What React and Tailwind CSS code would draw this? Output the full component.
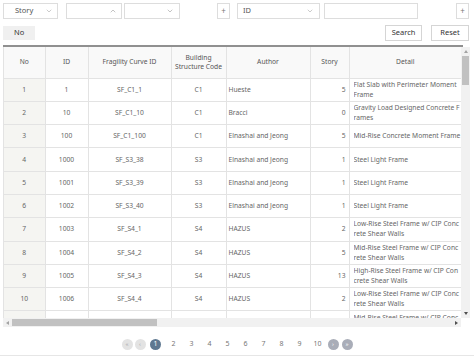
import { ChevronDown, ChevronUp } from 'lucide-react';

const rows = [
  { no: 1, id: '1', fc: 'SF_C1_1', code: 'C1', author: 'Hueste', story: 5, detail: ['Flat Slab with Perimeter Moment', 'Frame'] },
  { no: 2, id: '10', fc: 'SF_C1_10', code: 'C1', author: 'Bracci', story: 0, detail: ['Gravity Load Designed Concrete F', 'rames'] },
  { no: 3, id: '100', fc: 'SF_C1_100', code: 'C1', author: 'Elnashai and Jeong', story: 5, detail: ['Mid-Rise Concrete Moment Frame'] },
  { no: 4, id: '1000', fc: 'SF_S3_38', code: 'S3', author: 'Elnashai and Jeong', story: 1, detail: ['Steel Light Frame'] },
  { no: 5, id: '1001', fc: 'SF_S3_39', code: 'S3', author: 'Elnashai and Jeong', story: 1, detail: ['Steel Light Frame'] },
  { no: 6, id: '1002', fc: 'SF_S3_40', code: 'S3', author: 'Elnashai and Jeong', story: 1, detail: ['Steel Light Frame'] },
  { no: 7, id: '1003', fc: 'SF_S4_1', code: 'S4', author: 'HAZUS', story: 2, detail: ['Low-Rise Steel Frame w/ CIP Conc', 'rete Shear Walls'] },
  { no: 8, id: '1004', fc: 'SF_S4_2', code: 'S4', author: 'HAZUS', story: 5, detail: ['Mid-Rise Steel Frame w/ CIP Conc', 'rete Shear Walls'] },
  { no: 9, id: '1005', fc: 'SF_S4_3', code: 'S4', author: 'HAZUS', story: 13, detail: ['High-Rise Steel Frame w/ CIP Con', 'crete Shear Walls'] },
  { no: 10, id: '1006', fc: 'SF_S4_4', code: 'S4', author: 'HAZUS', story: 2, detail: ['Low-Rise Steel Frame w/ CIP Conc', 'rete Shear Walls'] },
  { no: 11, id: '1007', fc: 'SF_S4_5', code: 'S4', author: 'HAZUS', story: 5, detail: ['Mid-Rise Steel Frame w/ CIP Conc', 'rete Shear Walls'] },
];

const pages = [1, 2, 3, 4, 5, 6, 7, 8, 9, 10];

function App() {
  return (
    <div className="w-[474px] h-[363px] bg-white overflow-hidden text-[#555]" style={{ fontFamily: '"Noto Sans", "Open Sans", sans-serif' }}>
      {/* Filter row */}
      <div className="flex pt-[3px] h-[19px] text-[7.5px]">
        <div className="ml-[3px] w-[55px] h-[16px] border border-[#ddd] flex items-center pl-[11px] pr-[4px]">
          <span>Story</span>
          <ChevronDown size={8} strokeWidth={1.5} className="ml-auto text-[#999]" />
        </div>
        <div className="ml-[8px] w-[56px] h-[16px] border border-[#ddd] flex items-center pr-[4px]">
          <ChevronUp size={8} strokeWidth={1.5} className="ml-auto text-[#888]" />
        </div>
        <div className="ml-[2px] w-[56px] h-[16px] border border-[#ddd] flex items-center pr-[5px]">
          <ChevronDown size={8} strokeWidth={1.5} className="ml-auto text-[#888]" />
        </div>
        <div className="ml-[37px] w-[13px] h-[16px] border border-[#ddd] flex items-center justify-center text-[8px] text-[#777]">+</div>
        <div className="ml-[7px] w-[83px] h-[16px] border border-[#ddd] flex items-center pl-[5px] pr-[5px]">
          <span>ID</span>
          <ChevronDown size={8} strokeWidth={1.5} className="ml-auto text-[#999]" />
        </div>
        <div className="ml-[4px] w-[94px] h-[16px] border border-[#ddd]"></div>
        <div className="ml-[38px] w-[13px] h-[16px] border border-[#ddd] flex items-center justify-center text-[8px] text-[#777]">+</div>
      </div>

      {/* Tag + buttons */}
      <div className="flex items-center mt-[6px] h-[16px] text-[7.5px]">
        <div className="ml-[3px] w-[32px] h-[14px] bg-[#f0f0f0] flex items-center pl-[11px] text-[#333]">No</div>
        <div className="ml-auto w-[37px] h-[16px] border border-[#d5d5d5] flex items-center justify-center text-[#333]">Search</div>
        <div className="ml-[9px] mr-[5px] w-[38px] h-[16px] border border-[#d5d5d5] flex items-center justify-center text-[#333]">Reset</div>
      </div>

      {/* Grid */}
      <div className="mt-[4px] ml-[3px] w-[467px]">
        <div className="w-[460px] h-[2px] bg-[#909090]"></div>
        <div className="flex">
          <div className="w-[458px] h-[271px] overflow-hidden border-l border-[#e3e3e3]">
            <table className="table-fixed border-collapse w-[457px] text-[6.7px] text-[#666]">
              <colgroup>
                <col className="w-[41px]" />
                <col className="w-[43px]" />
                <col className="w-[83px]" />
                <col className="w-[55px]" />
                <col className="w-[84px]" />
                <col className="w-[39px]" />
                <col className="w-[112px]" />
              </colgroup>
              <thead>
                <tr className="bg-[#f9f9f9] text-[#555]">
                  <th className="h-[31px] font-normal border-b border-r border-[#e3e3e3]">No</th>
                  <th className="font-normal border-b border-r border-[#e3e3e3]">ID</th>
                  <th className="font-normal border-b border-r border-[#e3e3e3]">Fragility Curve ID</th>
                  <th className="font-normal border-b border-r border-[#e3e3e3] leading-[9px]">Building<br />Structure Code</th>
                  <th className="font-normal border-b border-r border-[#e3e3e3]">Author</th>
                  <th className="font-normal border-b border-r border-[#e3e3e3]">Story</th>
                  <th className="font-normal border-b border-[#e3e3e3]">Detail</th>
                </tr>
              </thead>
              <tbody>
                {rows.map((r) => (
                  <tr key={r.no}>
                    <td className="h-[23.3px] p-0 text-center bg-[#f5f5f2] border-b border-r border-[#e3e3e3]">{r.no}</td>
                    <td className="p-0 text-center border-b border-r border-[#e3e3e3]">{r.id}</td>
                    <td className="p-0 text-center border-b border-r border-[#e3e3e3]">{r.fc}</td>
                    <td className="p-0 text-center border-b border-r border-[#e3e3e3]">{r.code}</td>
                    <td className="p-0 pl-[2px] text-left border-b border-r border-[#e3e3e3] whitespace-nowrap overflow-hidden">{r.author}</td>
                    <td className="p-0 pr-[3px] text-right border-b border-r border-[#e3e3e3]">{r.story}</td>
                    <td className="p-0 pl-[4px] text-left border-b border-[#e3e3e3] leading-[10px]">
                      {r.detail.map((line, i) => (
                        <div key={i} className="whitespace-nowrap overflow-hidden">{line}</div>
                      ))}
                    </td>
                  </tr>
                ))}
              </tbody>
            </table>
          </div>
          {/* vertical scrollbar */}
          <div className="w-[9px] h-[271px] bg-[#f1f1f1] flex flex-col items-center">
            <div className="mt-[3px] w-0 h-0 border-l-[2.5px] border-r-[2.5px] border-b-[3px] border-l-transparent border-r-transparent border-b-[#a3a3a3]"></div>
            <div className="mt-[3px] w-[7px] h-[29px] bg-[#c1c1c1]"></div>
            <div className="mt-auto mb-[3px] w-0 h-0 border-l-[2.5px] border-r-[2.5px] border-t-[3px] border-l-transparent border-r-transparent border-t-[#505050]"></div>
          </div>
        </div>
        {/* horizontal scrollbar */}
        <div className="w-[458px] h-[9px] bg-[#f1f1f1] flex items-center">
          <div className="ml-[3px] w-0 h-0 border-t-[2.5px] border-b-[2.5px] border-r-[3px] border-t-transparent border-b-transparent border-r-[#a3a3a3]"></div>
          <div className="ml-[3px] w-[145px] h-[7px] bg-[#c1c1c1]"></div>
          <div className="ml-auto mr-[3px] w-0 h-0 border-t-[2.5px] border-b-[2.5px] border-l-[3px] border-t-transparent border-b-transparent border-l-[#505050]"></div>
        </div>
      </div>

      {/* Pagination */}
      <div className="h-[29px] pt-[7px] flex items-center justify-center border-b border-[#e6e6e6] text-[7px] text-[#777]">
        <div className="w-[11px] h-[11px] rounded-full bg-[#e3e3e3] flex items-center justify-center text-[6px] text-[#aaa]">«</div>
        <div className="ml-[2px] w-[11px] h-[11px] rounded-full bg-[#e3e3e3] flex items-center justify-center text-[6px] text-[#aaa]">‹</div>
        <div className="ml-[1px] flex">
          {pages.map((p) => (
            <div key={p} className="w-[18px] flex items-center justify-center">
              {p === 1 ? (
                <div className="w-[11px] h-[11px] rounded-full bg-[#5e7890] text-white flex items-center justify-center">1</div>
              ) : (
                <span>{p}</span>
              )}
            </div>
          ))}
        </div>
        <div className="ml-[1px] w-[11px] h-[11px] rounded-full bg-[#a9adb8] flex items-center justify-center text-[6px] text-white">›</div>
        <div className="ml-[3px] w-[11px] h-[11px] rounded-full bg-[#a9adb8] flex items-center justify-center text-[6px] text-white">»</div>
      </div>
    </div>
  );
}

export default App;
